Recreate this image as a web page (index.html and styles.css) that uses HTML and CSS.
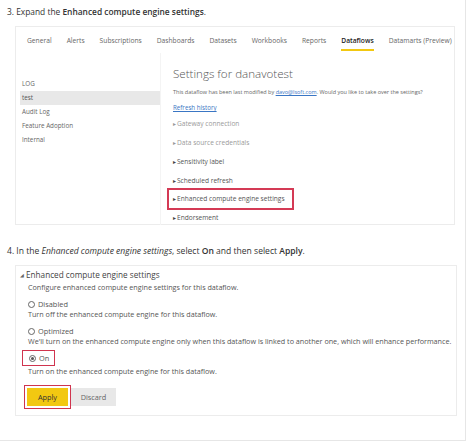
FILE: index.html
```html
<!DOCTYPE html>
<html>
<head>
<meta charset="utf-8">
<link rel="stylesheet" href="styles.css">
</head>
<body>
<div class="page">
  <p class="step s3">3. Expand the <b>Enhanced compute engine settings</b>.</p>
  <div class="shot1">
    <div class="tabs">
      <span class="tab">General</span>
      <span class="tab">Alerts</span>
      <span class="tab">Subscriptions</span>
      <span class="tab">Dashboards</span>
      <span class="tab">Datasets</span>
      <span class="tab">Workbooks</span>
      <span class="tab">Reports</span>
      <span class="tab active">Dataflows</span>
      <span class="tab">Datamarts (Preview)</span>
    </div>
    <div class="body1">
      <div class="nav">
        <div class="nav-item">LOG</div>
        <div class="nav-item sel">test</div>
        <div class="nav-item">Audit Log</div>
        <div class="nav-item">Feature Adoption</div>
        <div class="nav-item">Internal</div>
      </div>
      <div class="content">
        <div class="title">Settings for danavotest</div>
        <div class="desc">This dataflow has been last modified by <a class="link u">davo@lsoft.com</a>. Would you like to take over the settings?</div>
        <div class="refresh"><a class="link u">Refresh history</a></div>
        <div class="sec dim"><span class="tri">&#9656;</span>Gateway connection</div>
        <div class="sec dim"><span class="tri">&#9656;</span>Data source credentials</div>
        <div class="sec"><span class="tri">&#9656;</span>Sensitivity label</div>
        <div class="sec"><span class="tri">&#9656;</span>Scheduled refresh</div>
        <div class="sec"><span class="hl"><span class="tri">&#9656;</span>Enhanced compute engine settings</span></div>
        <div class="sec"><span class="tri">&#9656;</span>Endorsement</div>
      </div>
    </div>
  </div>
  <p class="step s4">4. In the <i>Enhanced compute engine settings</i>, select <b>On</b> and then select <b>Apply</b>.</p>
  <div class="shot2">
    <div class="hdr"><span class="tri2">&#9698;</span>Enhanced compute engine settings</div>
    <div class="opts">
      <div class="line first">Configure enhanced compute engine settings for this dataflow.</div>
      <div class="opt">
        <div class="radio-row"><span class="radio"></span>Disabled</div>
        <div class="line">Turn off the enhanced compute engine for this dataflow.</div>
      </div>
      <div class="opt">
        <div class="radio-row"><span class="radio"></span>Optimized</div>
        <div class="line">We'll turn on the enhanced compute engine only when this dataflow is linked to another one, which will enhance performance.</div>
      </div>
      <div class="opt">
        <div class="radio-row on-box"><span class="radio checked"></span>On</div>
        <div class="line">Turn on the enhanced compute engine for this dataflow.</div>
      </div>
      <div class="buttons">
        <span class="apply-box"><span class="btn apply">Apply</span></span>
        <span class="btn discard">Discard</span>
      </div>
    </div>
  </div>
</div>
</body>
</html>
```
FILE: styles.css
```css
html, body {
  margin: 0;
  padding: 0;
  background: #fff;
}
body {
  font-family: "Open Sans", "Noto Sans", sans-serif;
  color: #333;
}
.page {
  width: 465px;
  height: 436px;
  border-right: 1px solid #e6e6e6;
  border-bottom: 1px solid #e6e6e6;
  box-sizing: content-box;
  padding-top: 4px;
}
.step {
  margin: 0;
  font-size: 8.4px;
  line-height: 16px;
  padding-left: 7px;
  color: #333;
}
.step b { font-weight: 600; }
.s4 { margin-top: 18px; font-size: 8.55px; }
.shot1 {
  margin: 6px 0 0 15px;
  width: 440px;
  height: 199px;
  border: 1px solid #ececec;
  box-sizing: border-box;
  font-size: 6.7px;
  color: #666;
}
.tabs {
  display: flex;
  gap: 15px;
  padding: 0 0 0 11px;
  height: 26px;
  align-items: center;
  margin-top: 0;
}
.tab {
  position: relative;
  white-space: nowrap;
  line-height: 12px;
  padding-top: 1px;
  color: #666;
}
.tab.active {
  color: #222;
  font-weight: 600;
}
.tab.active::after {
  content: "";
  position: absolute;
  left: 0;
  right: 0;
  bottom: -4px;
  height: 1.5px;
  background: #f2c811;
}
.body1 {
  display: flex;
}
.nav {
  width: 140px;
  margin-left: 4px;
  padding-top: 24px;
  border-right: 1px solid #f4f4f4;
  height: 148px;
}
.nav-item {
  height: 14px;
  line-height: 14px;
  padding-left: 2px;
  color: #666;
  font-size: 6.3px;
}
.nav-item.sel { background: #e8e8e8; color: #555; }
.content {
  padding-left: 12px;
  padding-top: 13px;
  flex: 1;
}
.title {
  font-size: 11.6px;
  font-weight: 300;
  color: #555;
  line-height: 16px;
}
.desc {
  margin-top: 5px;
  font-size: 5.5px;
  line-height: 10px;
  color: #666;
}
.link { color: #3a76c4; }
.u { text-decoration: underline; }
.refresh {
  margin-top: 6px;
  font-size: 6.2px;
  line-height: 10px;
}
.sec {
  font-size: 6.6px;
  line-height: 10px;
  height: 18.8px;
  display: flex;
  align-items: center;
  color: #555;
}
.sec:nth-child(4) { margin-top: 2px; }
.sec.dim { color: #9a9a9a; }
.tri { font-size: 6px; margin-right: 1px; color: #444; }
.dim .tri { color: #999; }
.hl {
  display: inline-flex;
  align-items: center;
  border: 2px solid #d43a55;
  height: 22px;
  padding: 0 7px 0 4px;
  margin-left: -6px;
  margin-top: -2px;
  box-sizing: border-box;
}
.shot2 {
  margin: 6px 0 0 15px;
  width: 442px;
  height: 151px;
  border: 1px solid #ececec;
  box-sizing: border-box;
  font-size: 7.2px;
  color: #555;
}
.hdr {
  font-size: 8.2px;
  color: #444;
  padding: 3px 0 0 4px;
  line-height: 12px;
}
.tri2 { font-size: 5px; margin-right: 2px; color: #666; vertical-align: 1px; }
.opts { padding-left: 12px; }
.line { line-height: 10px; }
.line.first { margin-top: 1px; }
.opt { margin-top: 7px; }
.opt + .opt { margin-top: 7px; }
.opt:last-of-type { margin-top: 5px; }
.radio-row {
  display: flex;
  align-items: center;
  gap: 3px;
  line-height: 10px;
  font-size: 7.4px;
}
.radio {
  width: 5px;
  height: 5px;
  border: 0.8px solid #666;
  border-radius: 50%;
  box-sizing: content-box;
  position: relative;
}
.radio.checked::after {
  content: "";
  position: absolute;
  left: 1px;
  top: 1px;
  width: 3px;
  height: 3px;
  background: #555;
  border-radius: 50%;
}
.on-box {
  display: inline-flex;
  border: 1.5px solid #d0344e;
  padding: 2px 5px 2px 6px;
  margin-left: -6px;
  margin-top: -3px;
}
.buttons {
  display: flex;
  align-items: center;
  margin-top: 9px;
  margin-left: -4px;
}
.apply-box {
  border: 1.5px solid #d0344e;
  padding: 2px;
  display: inline-flex;
}
.btn {
  display: inline-flex;
  align-items: center;
  justify-content: center;
  height: 18px;
  font-size: 7.3px;
}
.apply {
  width: 41px;
  background: #f2c811;
  color: #333;
}
.discard {
  width: 45px;
  background: #e8e8e8;
  color: #666;
}
```
